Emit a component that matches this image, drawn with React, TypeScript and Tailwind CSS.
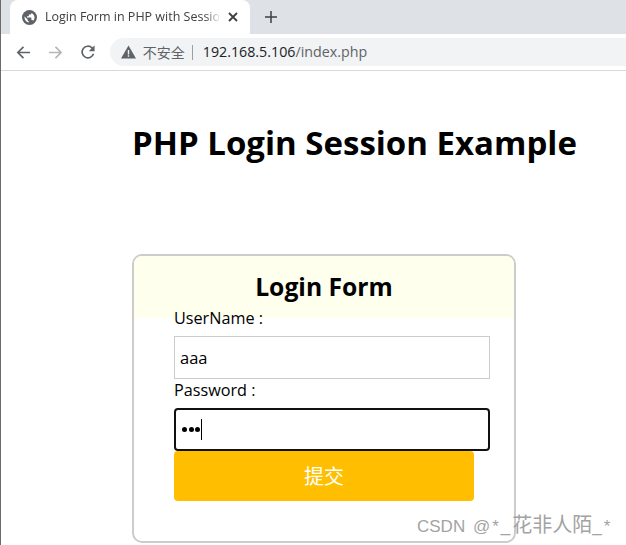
export default function App() {
  const sans = { fontFamily: '"Open Sans", "Noto Sans CJK SC", sans-serif' };
  return (
    <div className="relative w-[626px] h-[545px] overflow-hidden bg-white border-l border-l-[#6b6b6b] font-['Open_Sans','Noto_Sans_CJK_SC',sans-serif]">
      {/* tab strip */}
      <div className="h-[34px] bg-[#dee1e6] flex items-end pl-[9px]">
        <div className="w-[240px] h-[34px] bg-white rounded-t-[8px] flex items-center pl-[12px] pr-[9px]">
          <svg width="15" height="15" viewBox="0 0 24 24" className="shrink-0">
            <circle cx="12" cy="12" r="12" fill="#5f6368" />
            <path d="M11 21.900C7 21.400 4 18 4 14c0-.6.1-1.200.2-1.800L9 17v1c0 1.100.9 2 2 2v1.900zM17.900 19.300c-.3-.8-1-1.300-1.900-1.300h-1v-3c0-.6-.4-1-1-1H8v-2h2c.6 0 1-.4 1-1V9h2c1.100 0 2-.9 2-2v-.4c2.900 1.200 5 4 5 7.400 0 2.100-.8 4-2.100 5.300z" fill="#fff" transform="translate(0 -2)" />
          </svg>
          <span className="ml-[8px] w-[174px] whitespace-nowrap text-[12.500px] text-[#3c4043] [mask-image:linear-gradient(to_right,black_160px,transparent_176px)]">
            Login Form in PHP with Sessio
          </span>
          <svg width="10" height="10" viewBox="0 0 10 10" className="ml-[9px] shrink-0">
            <path d="M1 1l8 8M9 1l-8 8" stroke="#3c4043" strokeWidth="1.800" />
          </svg>
        </div>
        <svg width="12" height="12" viewBox="0 0 12 12" className="ml-[15px] mb-[11px]">
          <path d="M6 0v12M0 6h12" stroke="#3c4043" strokeWidth="1.500" />
        </svg>
      </div>
      {/* toolbar */}
      <div className="h-[37px] border-b border-b-[#d9d9d9] flex items-center pl-[15px]">
        <svg width="15" height="15" viewBox="0 0 16 16">
          <path d="M15 8H2M8 2L2 8l6 6" fill="none" stroke="#5f6368" strokeWidth="1.800" />
        </svg>
        <svg width="15" height="15" viewBox="0 0 16 16" className="ml-[17px]">
          <path d="M1 8h13M8 2l6 6-6 6" fill="none" stroke="#b4b6b9" strokeWidth="1.800" />
        </svg>
        <svg width="20" height="20" viewBox="0 0 24 24" className="ml-[15px]">
          <path d="M17.650 6.350A8 8 0 1 0 19.730 14h-2.080a6 6 0 1 1-1.410-6.240L13 11h7V4z" fill="#5f6368" />
        </svg>
        <div className="ml-[12px] w-[519px] h-[28px] bg-[#f1f3f4] rounded-l-[14px] flex items-center pl-[11px]">
          <svg width="15" height="14" viewBox="0 0 15 14">
            <path d="M7.500 0.500L15 13.500H0z" fill="#5f6368" />
            <path d="M6.800 5h1.400v4.500H6.800zM6.800 10.300h1.400v1.500H6.800z" fill="#f1f3f4" />
          </svg>
          <span className="ml-[7px] text-[14px] text-[#5f6368] font-['Noto_Sans_CJK_SC',sans-serif]">不安全</span>
          <span className="ml-[7px] w-px h-[15px] bg-[#9aa0a6]" />
          <span className="ml-[10px] text-[14.250px] whitespace-nowrap text-[#202124]">
            192.168.5.106<span className="text-[#5f6368]">/index.php</span>
          </span>
        </div>
      </div>
      {/* page */}
      <h1 className="mt-[49px] ml-[131px] text-[33px] leading-[46px] font-bold text-black whitespace-nowrap" style={sans}>
        PHP Login Session Example
      </h1>
      <div className="mt-[88px] ml-[131px] w-[384px] h-[289px] border-2 border-[#cccccc] rounded-[10px]">
        <div className="h-[62px] bg-[#ffffee] rounded-t-[8px] pt-[12px] text-center text-[24.700px] leading-[38px] font-bold text-black">
          Login Form
        </div>
        <div className="-mt-[10px] ml-[40px] w-[316px] text-[16.200px] leading-[20px] text-black">
          <div className="h-[28px]">UserName :</div>
          <div className="h-[43px] border border-[#cccccc] flex items-center px-[5px] text-[16.500px]">aaa</div>
          <div className="h-[29px] pt-[1px]">Password :</div>
          <div className="h-[43px] border-2 border-[#111111] rounded-[4px] flex items-center pl-[6px]">
            <span className="flex gap-[1.500px]">
              <span className="w-[5px] h-[5px] rounded-full bg-black" />
              <span className="w-[5px] h-[5px] rounded-full bg-black" />
              <span className="w-[5px] h-[5px] rounded-full bg-black" />
            </span>
            <span className="ml-[1px] w-px h-[21px] bg-black" />
          </div>
          <button className="block w-[300px] h-[50px] bg-[#ffbf00] rounded-[4px] text-white text-[20px] text-center font-['Noto_Sans_CJK_SC',sans-serif]">
            提交
          </button>
        </div>
      </div>
      <div className="absolute left-[416px] top-[513px] text-[17px] leading-[24px] text-[#a3a3a3] whitespace-nowrap [word-spacing:3px] font-['Liberation_Sans','Noto_Sans_CJK_SC',sans-serif]">
        CSDN <span className="tracking-[2px]">@*_</span><span className="text-[20px]">花非人陌</span><span className="tracking-[2px]">_*</span>
      </div>
    </div>
  );
}
